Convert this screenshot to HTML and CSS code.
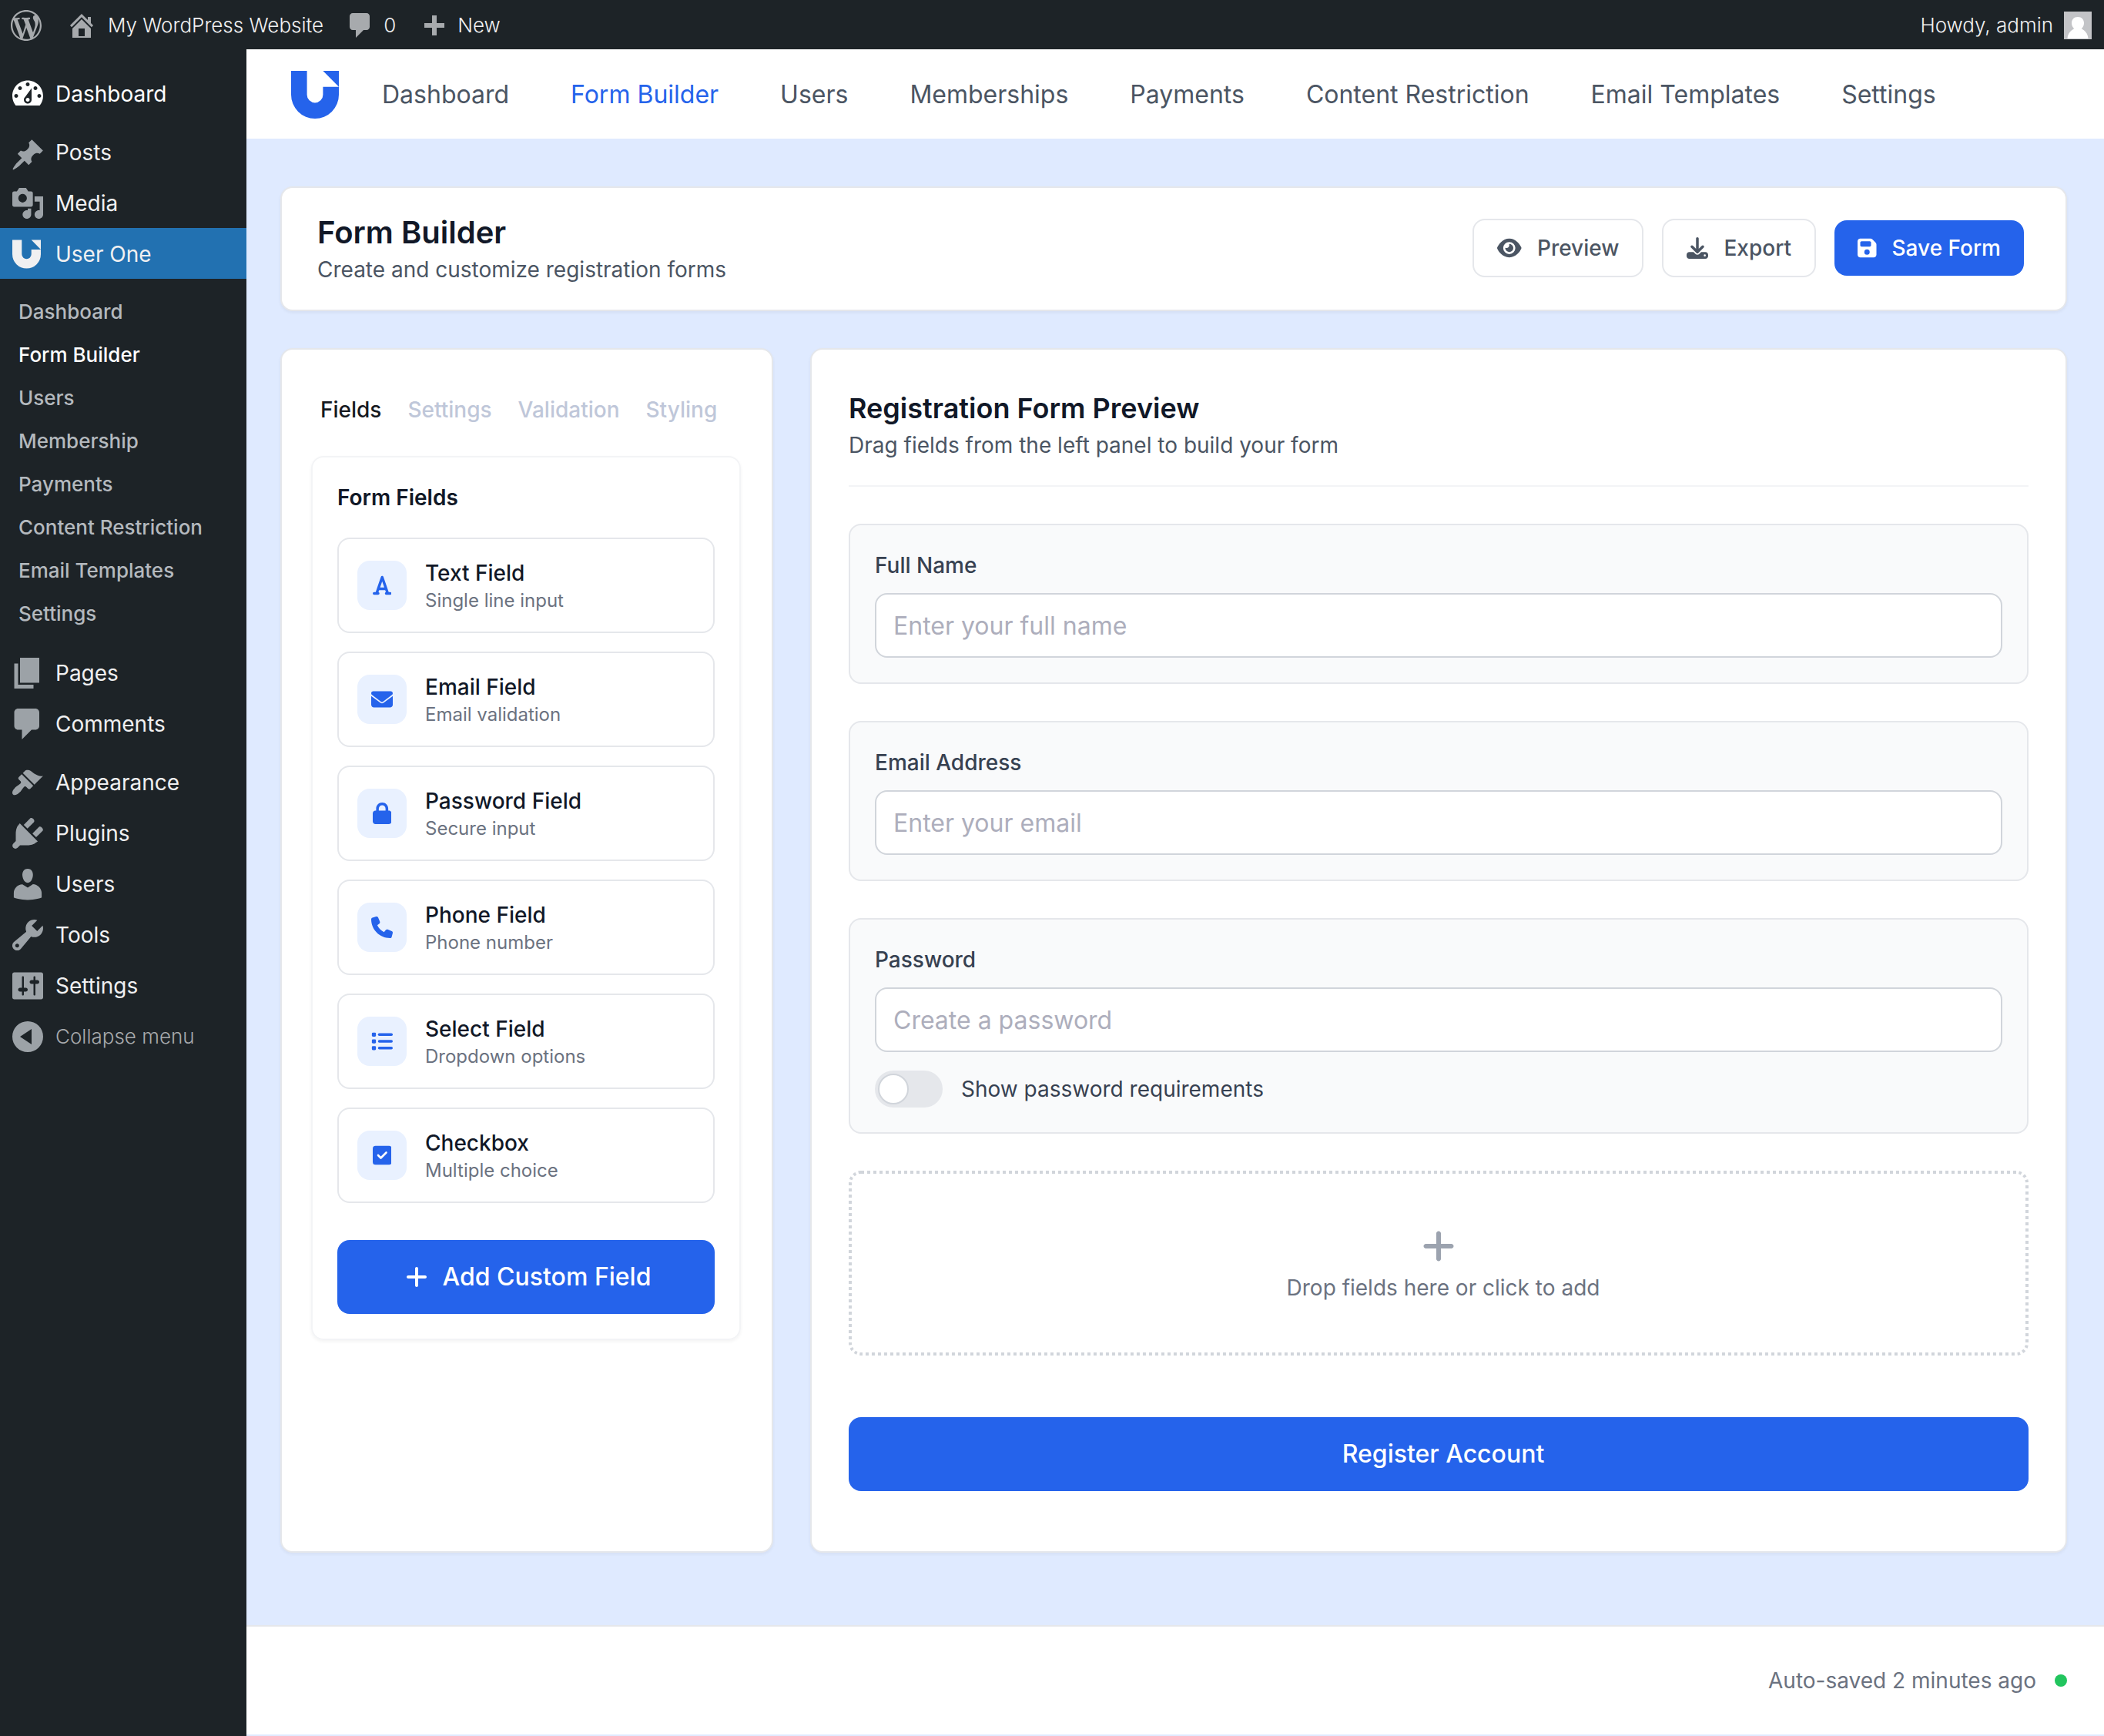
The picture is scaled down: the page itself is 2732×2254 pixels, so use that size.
FILE: index.html
```html
<!DOCTYPE html>
<html lang="en">
<head>
  <meta charset="UTF-8">
  <meta name="viewport" content="width=device-width, initial-scale=1.0">
  <title>Form Builder</title>
  <link rel="stylesheet" href="styles.css">
</head>
<body>

<!-- Admin bar -->
<header class="adminbar">
  <a href="#" class="adminbar-item" aria-label="WordPress">
    <svg class="bar-icon" viewBox="0 0 20 20"><path d="M20 10c0-5.51-4.49-10-10-10C4.48 0 0 4.49 0 10c0 5.52 4.48 10 10 10 5.51 0 10-4.48 10-10zM7.78 15.37L4.37 6.22c.55-.02 1.17-.08 1.17-.08.5-.06.44-1.13-.06-1.11 0 0-1.45.11-2.37.11-.18 0-.37 0-.58-.01C4.12 2.69 6.87 1.11 10 1.11c2.33 0 4.45.87 6.05 2.34-.68-.11-1.65.39-1.65 1.58 0 .74.45 1.36.9 2.1.35.61.55 1.36.55 2.46 0 1.49-1.4 5-1.4 5l-3.03-8.37c.54-.02.82-.17.82-.17.5-.05.44-1.25-.06-1.22 0 0-1.44.12-2.38.12-.87 0-2.33-.12-2.33-.12-.5-.03-.56 1.2-.06 1.22l.92.08 1.26 3.41zM17.41 10c.24-.64.74-1.87.43-4.25.7 1.29 1.05 2.71 1.05 4.25 0 3.29-1.73 6.24-4.4 7.78.97-2.59 1.94-5.2 2.92-7.78zM6.1 18.09C3.12 16.65 1.11 13.53 1.11 10c0-1.3.23-2.48.72-3.59C3.25 10.3 4.67 14.2 6.1 18.09zm4.03-6.63l2.58 6.98c-.86.29-1.76.45-2.71.45-.79 0-1.57-.11-2.29-.33.81-2.38 1.62-4.74 2.42-7.1z"/></svg>
  </a>
  <a href="#" class="adminbar-item adminbar-site">
    <svg class="bar-icon" viewBox="0 0 20 20"><path d="M16 8.5l1.53 1.53-1.06 1.06L10 4.6l-6.47 6.49-1.06-1.06L10 2.5l4 4v-2h2v4zm-6-2.46l6 5.99V18H4v-5.97zM12 17v-5H8v5h4z"/></svg>
    My WordPress Website
  </a>
  <a href="#" class="adminbar-item adminbar-comments">
    <svg class="bar-icon" viewBox="0 0 20 20"><path d="M5 2h9c1.1 0 2 .9 2 2v7c0 1.1-.9 2-2 2h-2l-5 5v-5H5c-1.1 0-2-.9-2-2V4c0-1.1.9-2 2-2z"/></svg>
    0
  </a>
  <a href="#" class="adminbar-item adminbar-new">
    <svg class="bar-icon" viewBox="0 0 20 20"><path d="M8.5 3.5h3v5h5v3h-5v5h-3v-5h-5v-3h5z"/></svg>
    New
  </a>
  <a href="#" class="adminbar-item adminbar-user">
    Howdy, admin
    <svg class="avatar" viewBox="0 0 36 36">
      <rect width="36" height="36" fill="#c3c4c7"/>
      <path fill="#fff" d="M18 7c-5 0-8 3.500-8 8 0 3 1.300 5.500 3.200 7C9 25 5 28 4.500 35h27C31 28 27 25 22.800 22c1.900-1.500 3.200-4 3.200-7 0-4.500-3-8-8-8z"/>
    </svg>
  </a>
</header>

<div class="layout">

  <!-- Sidebar -->
  <nav class="sidebar">
    <a href="#" class="menu-item menu-dashboard">
      <svg class="menu-icon" viewBox="0 0 20 20"><path d="M3.760 16h12.480c1.100-1.370 1.760-3.110 1.760-5 0-4.420-3.580-8-8-8s-8 3.580-8 8c0 1.890.66 3.630 1.760 5zM10 4c.55 0 1 .45 1 1s-.45 1-1 1-1-.45-1-1 .45-1 1-1zM6 6c.55 0 1 .45 1 1s-.45 1-1 1-1-.45-1-1 .45-1 1-1zm8 0c.55 0 1 .45 1 1s-.45 1-1 1-1-.45-1-1 .45-1 1-1zm-5.370 5.550L12 7v6c0 1.100-.9 2-2 2s-2-.9-2-2c0-.57.24-1.080.63-1.450zM4 10c.55 0 1 .45 1 1s-.45 1-1 1-1-.45-1-1 .45-1 1-1zm12 0c.55 0 1 .45 1 1s-.45 1-1 1-1-.45-1-1 .45-1 1-1zm-5 3c0-.55-.45-1-1-1s-1 .45-1 1 .45 1 1 1 1-.45 1-1z"/></svg>
      Dashboard
    </a>
    <div class="menu-group">
      <a href="#" class="menu-item">
        <svg class="menu-icon" viewBox="-1.1 -2.4 22 22"><path d="M10.44 3.02l1.82-1.82 6.36 6.35-1.83 1.82c-1.05-.68-2.48-.57-3.41.36l-.75.75c-.92.93-1.04 2.35-.35 3.41l-1.83 1.82-2.41-2.41-2.8 2.79c-.42.42-3.38 2.71-3.8 2.29s1.86-3.39 2.28-3.81l2.79-2.79L4.1 9.36l1.83-1.82c1.05.69 2.48.57 3.4-.36l.75-.75c.93-.92 1.05-2.35.36-3.41z"/></svg>
        Posts
      </a>
      <a href="#" class="menu-item">
        <svg class="menu-icon" viewBox="-1.25 -1.25 22.5 22.5"><path d="M13 11V4c0-.55-.45-1-1-1h-1.67L9 1H5L3.67 3H2c-.55 0-1 .45-1 1v7c0 .55.45 1 1 1h10c.55 0 1-.45 1-1zM7 4.5c1.38 0 2.5 1.12 2.5 2.5S8.38 9.5 7 9.5 4.5 8.38 4.5 7 5.62 4.5 7 4.5zM14 6h5v10.5c0 1.38-1.12 2.5-2.5 2.5S14 17.88 14 16.5s1.12-2.5 2.5-2.5c.17 0 .34.02.5.05V9h-3V6zm-4 8.05V13h2v3.5c0 1.38-1.12 2.5-2.5 2.5S7 17.88 7 16.5 8.12 14 9.5 14c.17 0 .34.02.5.05z"/></svg>
        Media
      </a>
      <a href="#" class="menu-item menu-current">
        <svg class="menu-icon" viewBox="-8.4 -11 83.8 83.8"><path d="M0 0H20.600V31a10.400 10.400 0 0 0 20.800 0V20.700H62V31a31 31 0 0 1-62 0zM41.400 0H62V20.700z"/></svg>
        User One
      </a>
      <div class="submenu">
        <a href="#">Dashboard</a>
        <a href="#" class="current">Form Builder</a>
        <a href="#">Users</a>
        <a href="#">Membership</a>
        <a href="#">Payments</a>
        <a href="#">Content Restriction</a>
        <a href="#">Email Templates</a>
        <a href="#">Settings</a>
      </div>
      <a href="#" class="menu-item">
        <svg class="menu-icon" viewBox="0 0 20 20"><path d="M6 15V2h10v13H6zm-1 1h8v2H3V5h2v11z"/></svg>
        Pages
      </a>
      <a href="#" class="menu-item">
        <svg class="menu-icon" viewBox="0 0 20 20"><path d="M5 2h9c1.1 0 2 .9 2 2v7c0 1.1-.9 2-2 2h-2l-5 5v-5H5c-1.1 0-2-.9-2-2V4c0-1.1.9-2 2-2z"/></svg>
        Comments
      </a>
    </div>
    <div class="menu-group">
      <a href="#" class="menu-item">
        <svg class="menu-icon" viewBox="-1.35 -1.95 23.5 23.5"><path d="M14.48 11.06L7.41 3.99l1.5-1.5c.5-.56 2.3-.47 3.51.32 1.21.8 1.43 1.28 2.91 2.1 1.18.64 2.45 1.26 4.45.85zm-.71.71L6.7 4.7 4.93 6.47c-.39.39-.39 1.02 0 1.41l1.06 1.06c.39.39.39 1.03 0 1.42-.6.6-1.43 1.11-2.21 1.69-.35.26-.7.53-1.01.84C1.43 14.23.4 16.08 1.4 17.07c.99 1 2.84-.03 4.18-1.36.31-.31.58-.66.85-1.02.57-.78 1.08-1.61 1.69-2.21.39-.39 1.02-.39 1.41 0l1.06 1.06c.39.39 1.02.39 1.41 0z"/></svg>
        Appearance
      </a>
      <a href="#" class="menu-item">
        <svg class="menu-icon" viewBox="0.35 0.35 19.3 19.3"><path d="M13.11 4.36L9.87 7.6 8 5.73l3.24-3.24c.35-.34 1.05-.2 1.56.32.52.51.66 1.21.31 1.55zm-8 1.77l.91-1.12 9.01 9.01-1.19.84c-.71.71-2.63 1.16-3.82 1.16H6.14L4.9 17.26c-.59.59-1.54.59-2.12 0-.59-.58-.59-1.53 0-2.12l1.24-1.24v-3.88c0-1.13.4-3.19 1.09-3.89zm7.26 3.97l3.24-3.24c.34-.35 1.04-.21 1.55.31.52.51.66 1.21.31 1.55l-3.24 3.25z"/></svg>
        Plugins
      </a>
      <a href="#" class="menu-item">
        <svg class="menu-icon" viewBox="0 0 20 20"><path d="M10 9.25c-2.27 0-2.73-3.44-2.73-3.44C7 4.02 7.82 2 9.97 2c2.16 0 2.98 2.02 2.71 3.81 0 0-.41 3.44-2.68 3.44zm0 2.57L12.72 10c2.39 0 4.52 2.33 4.52 4.53v2.49s-3.65 1.13-7.24 1.13c-3.65 0-7.24-1.13-7.24-1.13v-2.49c0-2.25 1.94-4.48 4.47-4.48z"/></svg>
        Users
      </a>
      <a href="#" class="menu-item">
        <svg class="menu-icon" viewBox="0 0 20 20"><path d="M16.68 9.77c-1.34 1.34-3.3 1.67-4.95.99l-5.41 6.52c-.99.99-2.59.99-3.58 0s-.99-2.59 0-3.57l6.52-5.42c-.68-1.65-.35-3.61.99-4.95 1.28-1.28 3.12-1.62 4.72-1.06l-2.89 2.89 2.82 2.82 2.86-2.87c.53 1.58.18 3.39-1.08 4.65zM3.81 16.21c.4.39 1.04.39 1.43 0 .4-.4.4-1.04 0-1.43-.39-.4-1.03-.4-1.43 0-.39.39-.39 1.03 0 1.43z"/></svg>
        Tools
      </a>
      <a href="#" class="menu-item">
        <svg class="menu-icon" viewBox="0 0 20 20"><path d="M18 16V4c0-.55-.45-1-1-1H3c-.55 0-1 .45-1 1v12c0 .55.45 1 1 1h14c.55 0 1-.45 1-1zM8 11h1c.55 0 1 .45 1 1s-.45 1-1 1H8v1.5c0 .28-.22.5-.5.5s-.5-.22-.5-.5V13H6c-.55 0-1-.45-1-1s.45-1 1-1h1V5.5c0-.28.22-.5.5-.5s.5.22.5.5V11zm5-2h-1c-.55 0-1-.45-1-1s.45-1 1-1h1V5.5c0-.28.22-.5.5-.5s.5.22.5.5V7h1c.55 0 1 .45 1 1s-.45 1-1 1h-1v5.5c0 .28-.22.5-.5.5s-.5-.22-.5-.5V9z"/></svg>
        Settings
      </a>
      <button type="button" class="menu-item menu-collapse">
        <svg class="menu-icon" viewBox="0 0 20 20"><path fill-rule="evenodd" d="M10 2a8 8 0 1 0 0 16 8 8 0 0 0 0-16zM12 6v8l-6-4z"/></svg>
        Collapse menu
      </button>
    </div>
  </nav>

  <div class="content">

    <!-- Plugin navigation -->
    <nav class="topnav">
      <svg class="logo" viewBox="0 0 62 62"><path d="M0 0H20.600V31a10.400 10.400 0 0 0 20.800 0V20.700H62V31a31 31 0 0 1-62 0zM41.400 0H62V20.700z"/></svg>
      <a href="#">Dashboard</a>
      <a href="#" class="active">Form Builder</a>
      <a href="#">Users</a>
      <a href="#">Memberships</a>
      <a href="#">Payments</a>
      <a href="#">Content Restriction</a>
      <a href="#">Email Templates</a>
      <a href="#">Settings</a>
    </nav>

    <main class="main">
      <section class="card page-head">
        <div>
          <h1>Form Builder</h1>
          <p class="lead">Create and customize registration forms</p>
        </div>
        <div class="page-actions">
          <button type="button" class="btn btn-outline">
            <svg class="btn-icon" viewBox="0 0 576 512"><path d="M288 32c-80.8 0-145.5 36.8-192.6 80.6C48.6 156 17.3 208 2.5 243.7c-3.3 7.9-3.3 16.7 0 24.6C17.3 304 48.6 356 95.4 399.400C142.5 443.2 207.2 480 288 480s145.5-36.8 192.6-80.6c46.8-43.5 78.1-95.400 93-131.100c3.3-7.9 3.3-16.7 0-24.600c-14.9-35.7-46.2-87.700-93-131.100C433.5 68.8 368.8 32 288 32zM144 256a144 144 0 1 1 288 0 144 144 0 1 1 -288 0zm144-64c0 35.3-28.7 64-64 64c-7.1 0-13.9-1.2-20.3-3.3c-5.5-1.8-11.9 1.6-11.7 7.4c.3 6.9 1.3 13.8 3.2 20.7c13.7 51.2 66.4 81.6 117.6 67.9s81.6-66.4 67.9-117.6c-11.1-41.5-47.8-69.4-88.6-71.1c-5.8-.2-9.2 6.1-7.4 11.7c2.1 6.4 3.3 13.2 3.3 20.3z"/></svg>
            Preview
          </button>
          <button type="button" class="btn btn-outline">
            <svg class="btn-icon" viewBox="0 0 512 512"><path d="M288 32c0-17.7-14.3-32-32-32s-32 14.3-32 32V274.7l-73.4-73.4c-12.5-12.5-32.8-12.5-45.3 0s-12.5 32.8 0 45.3l128 128c12.5 12.5 32.8 12.5 45.3 0l128-128c12.5-12.5 12.5-32.8 0-45.3s-32.8-12.5-45.3 0L288 274.7V32zM64 352c-35.3 0-64 28.7-64 64v32c0 35.3 28.7 64 64 64H448c35.3 0 64-28.7 64-64V416c0-35.3-28.7-64-64-64H346.5l-45.3 45.3c-25 25-65.5 25-90.5 0L165.5 352H64zm368 56a24 24 0 1 1 0 48 24 24 0 1 1 0-48z"/></svg>
            Export
          </button>
          <button type="button" class="btn btn-primary">
            <svg class="btn-icon" viewBox="0 0 448 512"><path d="M64 32C28.7 32 0 60.7 0 96V416c0 35.3 28.7 64 64 64H384c35.3 0 64-28.7 64-64V173.3c0-17-6.7-33.3-18.7-45.3L352 50.7C340 38.7 323.7 32 306.7 32H64zm0 96c0-17.7 14.3-32 32-32H288c17.7 0 32 14.3 32 32v64c0 17.7-14.3 32-32 32H96c-17.7 0-32-14.3-32-32V128zM224 288a64 64 0 1 1 0 128 64 64 0 1 1 0-128z"/></svg>
            Save Form
          </button>
        </div>
      </section>

      <div class="builder">

        <!-- Field picker -->
        <aside class="card panel-left">
          <div class="tabs">
            <button type="button" class="tab active">Fields</button>
            <button type="button" class="tab">Settings</button>
            <button type="button" class="tab">Validation</button>
            <button type="button" class="tab">Styling</button>
          </div>
          <div class="field-panel">
            <h3>Form Fields</h3>
            <div class="field-list">
              <button type="button" class="field">
                <span class="field-icon"><svg viewBox="0 0 448 512"><path class="stroke" d="M92 448L224 64l132 384M132 336h184M32 448h96M320 448h96"/></svg></span>
                <span class="field-text"><span class="field-name">Text Field</span><span class="field-desc">Single line input</span></span>
              </button>
              <button type="button" class="field">
                <span class="field-icon"><svg viewBox="0 0 512 512"><path d="M48 64C21.5 64 0 85.5 0 112c0 15.1 7.1 29.3 19.2 38.4L236.8 313.6c11.4 8.5 27 8.5 38.4 0L492.8 150.4c12.1-9.1 19.2-23.3 19.2-38.4c0-26.5-21.5-48-48-48H48zM0 176V384c0 35.3 28.7 64 64 64H448c35.3 0 64-28.7 64-64V176L294.4 339.2c-22.8 17.1-54 17.1-76.8 0L0 176z"/></svg></span>
                <span class="field-text"><span class="field-name">Email Field</span><span class="field-desc">Email validation</span></span>
              </button>
              <button type="button" class="field">
                <span class="field-icon"><svg viewBox="0 0 448 512"><path d="M144 144v48H304V144c0-44.2-35.8-80-80-80s-80 35.8-80 80zM80 192V144C80 64.5 144.5 0 224 0s144 64.5 144 144v48h16c35.3 0 64 28.7 64 64V448c0 35.3-28.7 64-64 64H64c-35.3 0-64-28.7-64-64V256c0-35.3 28.7-64 64-64H80z"/></svg></span>
                <span class="field-text"><span class="field-name">Password Field</span><span class="field-desc">Secure input</span></span>
              </button>
              <button type="button" class="field">
                <span class="field-icon"><svg viewBox="0 0 512 512"><path d="M164.9 24.6c-7.7-18.6-28-28.5-47.4-23.2l-88 24C12.1 30.2 0 46 0 64C0 311.4 200.6 512 448 512c18 0 33.8-12.1 38.6-29.5l24-88c5.3-19.4-4.6-39.7-23.2-47.4l-96-40c-16.3-6.8-35.2-2.1-46.3 11.6L304.7 368C234.3 334.7 177.3 277.7 144 207.3L193.3 167c13.7-11.2 18.4-30 11.6-46.3l-40-96z"/></svg></span>
                <span class="field-text"><span class="field-name">Phone Field</span><span class="field-desc">Phone number</span></span>
              </button>
              <button type="button" class="field">
                <span class="field-icon"><svg viewBox="0 0 512 512"><rect x="16" y="48" width="96" height="96" rx="24"/><rect x="16" y="208" width="96" height="96" rx="24"/><rect x="16" y="368" width="96" height="96" rx="24"/><rect x="160" y="64" width="352" height="64" rx="32"/><rect x="160" y="224" width="352" height="64" rx="32"/><rect x="160" y="384" width="352" height="64" rx="32"/></svg></span>
                <span class="field-text"><span class="field-name">Select Field</span><span class="field-desc">Dropdown options</span></span>
              </button>
              <button type="button" class="field">
                <span class="field-icon"><svg viewBox="0 0 448 512"><rect y="32" width="448" height="448" rx="64"/><path class="check" d="M128 256l64 64 128-128"/></svg></span>
                <span class="field-text"><span class="field-name">Checkbox</span><span class="field-desc">Multiple choice</span></span>
              </button>
            </div>
            <button type="button" class="btn-block btn-add">
              <svg class="plus" viewBox="0 0 448 512"><path d="M256 80c0-17.7-14.3-32-32-32s-32 14.3-32 32V224H48c-17.7 0-32 14.3-32 32s14.3 32 32 32H192V432c0 17.7 14.3 32 32 32s32-14.3 32-32V288H400c17.7 0 32-14.3 32-32s-14.3-32-32-32H256V80z"/></svg>
              Add Custom Field
            </button>
          </div>
        </aside>

        <!-- Form preview -->
        <form class="card panel-right" onsubmit="return false">
          <div class="preview-head">
            <h2>Registration Form Preview</h2>
            <p class="lead">Drag fields from the left panel to build your form</p>
          </div>
          <div class="form-box">
            <label for="fullName">Full Name</label>
            <input type="text" id="fullName" class="input" placeholder="Enter your full name">
          </div>
          <div class="form-box">
            <label for="email">Email Address</label>
            <input type="email" id="email" class="input" placeholder="Enter your email">
          </div>
          <div class="form-box">
            <label for="password">Password</label>
            <input type="password" id="password" class="input" placeholder="Create a password">
            <div class="toggle-row">
              <input type="checkbox" id="showReq" class="toggle">
              <label for="showReq">Show password requirements</label>
            </div>
          </div>
          <button type="button" class="dropzone">
            <svg viewBox="0 0 448 512"><path d="M256 80c0-17.7-14.3-32-32-32s-32 14.3-32 32V224H48c-17.7 0-32 14.3-32 32s14.3 32 32 32H192V432c0 17.7 14.3 32 32 32s32-14.3 32-32V288H400c17.7 0 32-14.3 32-32s-14.3-32-32-32H256V80z"/></svg>
            <span class="centered">Drop fields here or click to add</span>
          </button>
          <button type="submit" class="btn-block btn-register"><span class="centered">Register Account</span></button>
        </form>

      </div>
    </main>

    <footer class="footer">
      <span>Auto-saved 2 minutes ago</span>
      <span class="status-dot"></span>
    </footer>
  </div>
</div>

</body>
</html>
```

FILE: styles.css
```css
*,
*::before {
  box-sizing: border-box;
}

body {
  margin: 0;
  background-color: #dfeaff;
  font-family: Inter, "Liberation Sans", sans-serif;
  font-size: 28px;
  line-height: 40px;
  color: #111827;
}

a {
  text-decoration: none;
  color: inherit;
}

button,
input {
  font-family: inherit;
  font-size: inherit;
  line-height: inherit;
  color: inherit;
}

button {
  cursor: pointer;
}

svg {
  display: block;
  flex-shrink: 0;
  fill: currentColor;
}

h1, h2, h3, p {
  margin: 0;
}

/* --- Admin bar --- */
.adminbar {
  display: flex;
  align-items: center;
  height: 64px;
  padding: 2px 16px 0 14px;
  background-color: #1d2327;
  color: #f0f0f1;
  font-size: 26px;
  font-weight: 300;
}

.adminbar-item {
  display: flex;
  align-items: center;
  gap: 14px;
}

.adminbar-site {
  margin-left: 32px;
}

.adminbar-comments {
  margin-left: 28px;
  gap: 10px;
}

.adminbar-new {
  margin-left: 30px;
  gap: 10px;
}

.adminbar-user {
  margin-left: auto;
}

.bar-icon {
  width: 40px;
  height: 40px;
  color: #a7aaad;
}

.avatar {
  width: 36px;
  height: 36px;
}

/* --- Sidebar --- */
.layout {
  display: flex;
  min-height: calc(100vh - 64px);
}

.sidebar {
  flex: 0 0 320px;
  display: flex;
  flex-direction: column;
  gap: 10px;
  padding-top: 24px;
  background-color: #1d2327;
  color: #f0f0f1;
}

.menu-item {
  display: flex;
  align-items: center;
  gap: 11px;
  width: 100%;
  height: 66px;
  padding: 2px 11px 0;
}

.menu-icon {
  width: 50px;
  height: 50px;
  color: #9ca2a7;
}

.menu-dashboard,
.menu-dashboard .menu-icon {
  color: #fff;
}

.menu-current {
  background-color: #2271b1;
}

.menu-current .menu-icon {
  color: #f0f0f1;
}

.menu-collapse {
  border: none;
  background: none;
  font-size: 26px;
  font-weight: 300;
  color: #a7aaad;
}

.submenu {
  display: flex;
  flex-direction: column;
  padding: 15px 24px;
  font-size: 26px;
  font-weight: 500;
  line-height: 56px;
  color: #b4b9be;
}

.submenu .current {
  color: #fff;
}

/* --- Plugin navigation --- */
.content {
  flex: 1;
  min-width: 0;
}

.topnav {
  display: flex;
  align-items: center;
  gap: 80px;
  height: 116px;
  padding: 2px 58px 0;
  background-color: #fff;
  font-size: 32px;
  color: #4b5563;
}

.topnav .active {
  color: #2563eb;
}

.logo {
  width: 62px;
  height: 62px;
  margin-right: -24px;
  color: #2563eb;
}

/* --- Cards --- */
.main {
  display: flex;
  flex-direction: column;
  gap: 48px;
  padding: 62px 48px 94px 44px;
}

.card {
  background-color: #fff;
  border: 2px solid #e5e7eb;
  border-radius: 16px;
  box-shadow: 0 2px 4px rgba(0, 0, 0, 0.05);
}

.lead {
  color: #4b5563;
}

.page-head {
  display: flex;
  justify-content: space-between;
  align-items: center;
  padding: 30px 54px 32px 46px;
}

.page-head h1 {
  font-size: 40px;
  line-height: 56px;
  font-weight: 600;
}

.page-actions {
  display: flex;
  align-items: center;
  gap: 24px;
}

.btn {
  display: flex;
  align-items: center;
  gap: 20px;
  height: 72px;
  padding: 0 30px;
  border: none;
  border-radius: 16px;
  font-weight: 500;
}

.btn-icon {
  height: 28px;
}

.btn-outline {
  height: 76px;
  border: 2px solid #e5e7eb;
  background-color: #fff;
  color: #4b5563;
}

.btn-primary {
  background-color: #2563eb;
  color: #fff;
}

.btn-block {
  display: flex;
  justify-content: center;
  align-items: center;
  gap: 20px;
  width: 100%;
  height: 96px;
  border: none;
  border-radius: 16px;
  background-color: #2563eb;
  color: #fff;
  font-size: 32px;
  font-weight: 500;
}

.btn-add {
  padding-left: 12px;
}

.plus {
  height: 32px;
}

.builder {
  display: grid;
  grid-template-columns: 640px 1fr;
  gap: 48px;
}

/* --- Field picker --- */
.panel-left {
  padding: 58px 40px 40px 38px;
}

.tabs {
  display: flex;
  gap: 34px;
  padding-left: 12px;
}

.tab {
  padding: 0;
  border: none;
  background: none;
  font-weight: 500;
  color: #bfc7d9;
}

.tab.active {
  color: #171a1f;
}

.field-panel {
  margin-top: 40px;
  padding: 32px;
  border: 2px solid #f3f4f6;
  border-radius: 16px;
  box-shadow: 0 2px 4px rgba(0, 0, 0, 0.05);
}

.field-panel h3 {
  font-size: 28px;
  font-weight: 600;
}

.field-list {
  display: flex;
  flex-direction: column;
  gap: 24px;
  margin: 32px 0 48px;
}

.field {
  display: flex;
  align-items: center;
  gap: 24px;
  padding: 24px;
  border: 2px solid #e5e7eb;
  border-radius: 16px;
  background-color: #fff;
  text-align: left;
}

.field-icon {
  display: flex;
  justify-content: center;
  align-items: center;
  width: 64px;
  height: 64px;
  border-radius: 16px;
  background-color: #e9f1ff;
  color: #2563eb;
}

.field-icon svg {
  height: 28px;
}

.field-icon .stroke {
  fill: none;
  stroke: currentColor;
  stroke-width: 64;
  stroke-linecap: round;
  stroke-linejoin: round;
}

.field-icon .check {
  fill: none;
  stroke: #fff;
  stroke-width: 48;
  stroke-linecap: round;
  stroke-linejoin: round;
}

.field-text {
  display: flex;
  flex-direction: column;
}

.field-name {
  font-weight: 500;
}

.field-desc {
  font-size: 24px;
  line-height: 32px;
  color: #6b7280;
}

/* --- Form preview --- */
.panel-right {
  display: flex;
  flex-direction: column;
  gap: 48px;
  padding: 48px 48px 78px;
}

.preview-head {
  padding-bottom: 32px;
  border-bottom: 2px solid #f3f4f6;
}

.preview-head h2 {
  font-size: 36px;
  line-height: 56px;
  font-weight: 600;
}

.form-box {
  display: flex;
  flex-direction: column;
  gap: 16px;
  padding: 32px;
  border: 2px solid #e5e7eb;
  border-radius: 16px;
  background-color: #f9fafb;
  color: #374151;
}

.form-box > label {
  font-weight: 500;
}

.input {
  width: 100%;
  height: 84px;
  padding: 0 22px;
  border: 2px solid #d1d5db;
  border-radius: 16px;
  background-color: #fff;
  font-size: 32px;
}

.input::placeholder {
  color: #adaebc;
  opacity: 1;
}

.toggle-row {
  display: flex;
  align-items: center;
  gap: 24px;
  margin-top: 8px;
}

.toggle {
  appearance: none;
  display: flex;
  align-items: center;
  width: 88px;
  height: 48px;
  margin: 0;
  padding: 0 4px;
  border-radius: 24px;
  background-color: #e5e7eb;
  cursor: pointer;
}

.toggle::before {
  content: "";
  width: 40px;
  height: 40px;
  border: 2px solid #d1d5db;
  border-radius: 50%;
  background-color: #fff;
}

.toggle:checked {
  justify-content: flex-end;
  background-color: #2563eb;
}

/* square dots that follow the rounded corners */
.dropzone {
  display: flex;
  flex-direction: column;
  justify-content: center;
  align-items: center;
  gap: 10px;
  height: 240px;
  padding: 6px 0 0;
  border: none;
  border-radius: 16px;
  background: url("data:image/svg+xml,%3Csvg xmlns='http://www.w3.org/2000/svg' width='100%25' height='100%25'%3E%3Crect width='100%25' height='100%25' rx='16' fill='none' stroke='%23d1d5db' stroke-width='8' stroke-dasharray='4 4'/%3E%3C/svg%3E");
  color: #6b7280;
}

.dropzone svg {
  height: 48px;
  color: #9ca3af;
}

.centered {
  padding-left: 12px;
}

.btn-register {
  margin-top: 32px;
}

/* --- Footer --- */
.footer {
  display: flex;
  justify-content: flex-end;
  align-items: center;
  gap: 24px;
  height: 142px;
  padding: 0 48px;
  border-top: 2px solid #e5e7eb;
  background-color: #fff;
  color: #6b7280;
}

.status-dot {
  width: 16px;
  height: 16px;
  border-radius: 50%;
  background-color: #22c55e;
}
```
